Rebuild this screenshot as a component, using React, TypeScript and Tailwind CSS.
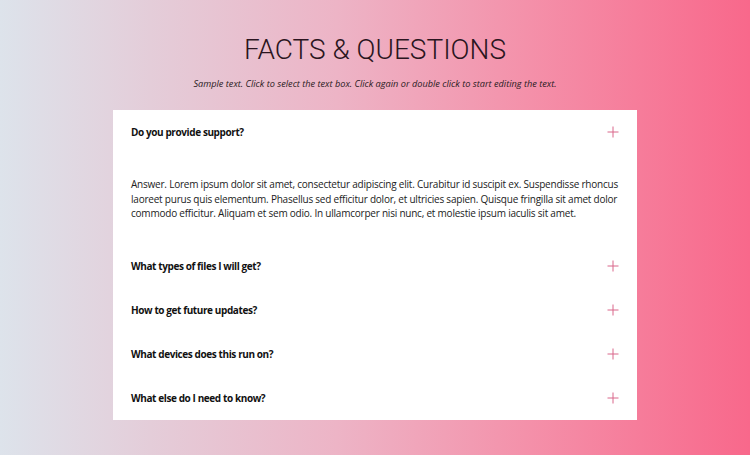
import React from "react";

const Plus = () => (
  <svg width="12" height="12" viewBox="0 0 12 12" className="shrink-0">
    <path d="M6 0.5V11.5M0.5 6H11.5" stroke="#d9668a" strokeWidth="1" fill="none" />
  </svg>
);

const questions = [
  "What types of files I will get?",
  "How to get future updates?",
  "What devices does this run on?",
  "What else do I need to know?",
];

export default function App() {
  return (
    <div
      className="w-[750px] h-[455px] overflow-hidden flex flex-col items-center bg-[linear-gradient(90deg,#dde3eb_0%,#e4cdd9_20%,#edb4c6_45%,#f491aa_70%,#f8688b_100%)]"
      style={{ fontFamily: "'Open Sans', sans-serif" }}
    >
      <h1
        className="mt-[33px] text-[28px] leading-[34px] font-light text-[#2a1520]"
        style={{ fontFamily: "Roboto, sans-serif" }}
      >
        FACTS &amp; QUESTIONS
      </h1>
      <p className="mt-[10px] text-[9.2px] leading-[14px] italic text-[#2a1a22]">
        Sample text. Click to select the text box. Click again or double click to start editing the text.
      </p>
      <div className="mt-[19px] w-[524px] bg-white flex flex-col">
        <div className="h-[44px] flex items-center justify-between pl-[18px] pr-[18px]">
          <span className="text-[10px] font-bold tracking-[-0.4px] text-[#111]">Do you provide support?</span>
          <Plus />
        </div>
        <div className="pl-[18px] pr-[12px] pt-[23px] pb-[23px] h-[90px]">
          <p className="text-[10px] leading-[14.6px] tracking-[-0.22px] text-[#222]">
            Answer. Lorem ipsum dolor sit amet, consectetur adipiscing elit. Curabitur id suscipit ex. Suspendisse rhoncus laoreet purus quis elementum. Phasellus sed efficitur dolor, et ultricies sapien. Quisque fringilla sit amet dolor commodo efficitur. Aliquam et sem odio. In ullamcorper nisi nunc, et molestie ipsum iaculis sit amet.
          </p>
        </div>
        {questions.map((q) => (
          <div key={q} className="h-[44px] flex items-center justify-between pl-[18px] pr-[18px]">
            <span className="text-[10px] font-bold tracking-[-0.4px] text-[#111]">{q}</span>
            <Plus />
          </div>
        ))}
      </div>
    </div>
  );
}
